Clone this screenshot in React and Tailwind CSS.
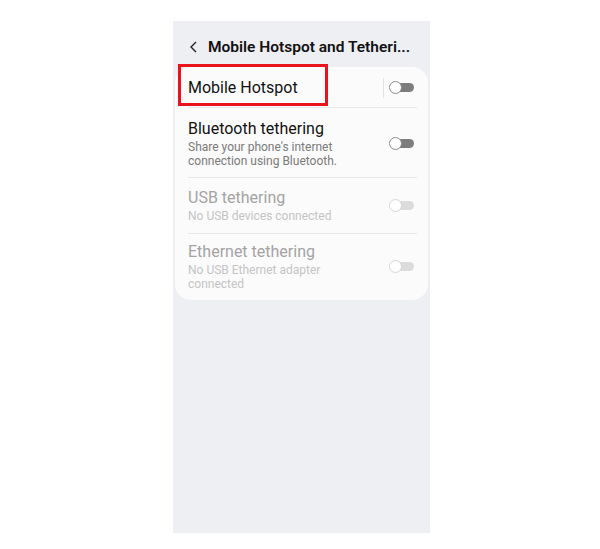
import React from 'react';

const Toggle = ({ disabled }) => (
  <div className="relative w-[25px] h-[13px] shrink-0">
    <div
      className={`absolute left-[4px] right-0 top-[2px] h-[9px] rounded-r-full ${
        disabled ? 'bg-[#dcdcdc]' : 'bg-[#7d7d7d]'
      }`}
    />
    <div
      className={`absolute left-0 top-0 w-[13px] h-[13px] rounded-full bg-white border ${
        disabled ? 'border-[#d6d6d6]' : 'border-[#8a8a8a]'
      }`}
    />
  </div>
);

const Row = ({ title, subtitle, disabled, className }) => (
  <div className={`flex items-center justify-between pl-[13px] pr-[14px] ${className}`}>
    <div className="w-[180px]">
      <div className={`text-[16px] leading-[20px] ${disabled ? 'text-[#a3a3a3]' : 'text-[#111]'}`}>
        {title}
      </div>
      {subtitle && (
        <div className={`text-[12px] leading-[14px] mt-[1px] ${disabled ? 'text-[#c4c4c4]' : 'text-[#7a7a7a]'}`}>
          {subtitle}
        </div>
      )}
    </div>
    <Toggle disabled={disabled} />
  </div>
);

const Divider = () => <div className="mr-[11px] ml-[13px] h-px bg-[#e7e7e7]" />;

export default function App() {
  return (
    <div className="w-[600px] h-[549px] bg-white pt-[21px] pl-[173px]" style={{ fontFamily: 'Roboto, "Noto Sans", sans-serif' }}>
      <div className="w-[257px] h-[512px] bg-[#eeeff3] relative">
        {/* Header */}
        <div className="h-[46px] flex items-start pt-[16px] pl-[16px]">
          <svg width="9" height="12" viewBox="0 0 9 12" className="mt-[4px] shrink-0">
            <polyline points="7,1 2,6 7,11" fill="none" stroke="#222" strokeWidth="1.4" />
          </svg>
          <div className="ml-[10px] text-[15.5px] leading-[20px] font-semibold text-[#111] whitespace-nowrap">
            Mobile Hotspot and Tetheri...
          </div>
        </div>

        {/* Card */}
        <div className="mx-[2px] bg-[#fbfbfb] rounded-[16px] pb-[9px]">
          <div className="h-[40px] pt-[1px] flex items-center justify-between pl-[13px] pr-[14px]">
            <div className="text-[16px] leading-[20px] text-[#111]">Mobile Hotspot</div>
            <div className="flex items-center">
              <div className="w-px h-[20px] bg-[#e4e4e4] mr-[5px]" />
              <Toggle />
            </div>
          </div>
          <Divider />
          <Row
            className="pt-[11px] pb-[9px]"
            title="Bluetooth tethering"
            subtitle="Share your phone's internet connection using Bluetooth."
          />
          <Divider />
          <Row
            className="pt-[10px] pb-[10px]"
            title="USB tethering"
            subtitle="No USB devices connected"
            disabled
          />
          <Divider />
          <Row
            className="pt-[8px]"
            title="Ethernet tethering"
            subtitle="No USB Ethernet adapter connected"
            disabled
          />
        </div>

        {/* Highlight box */}
        <div className="absolute left-[5px] top-[43px] w-[150px] h-[42px] border-[3px] border-[#e8131b]" />
      </div>
    </div>
  );
}
